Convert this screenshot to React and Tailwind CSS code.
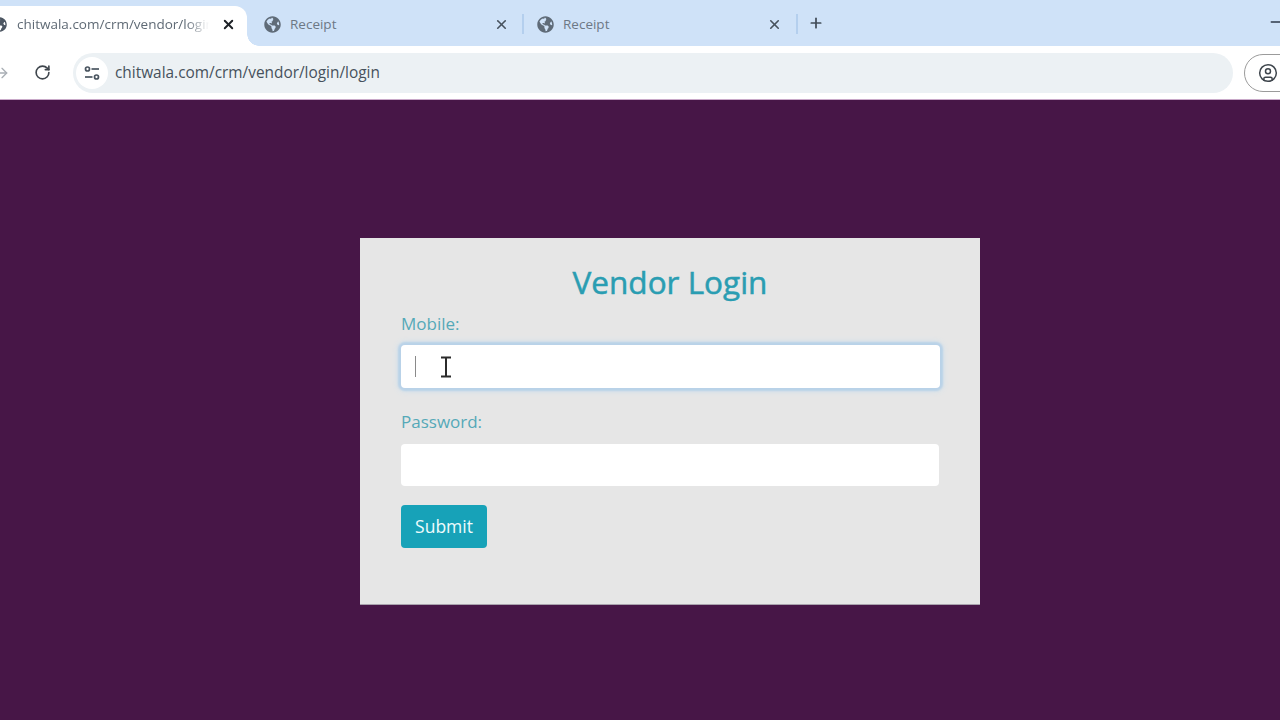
import React from 'react';
import { ArrowRight, CircleUser, Minus, Plus, RotateCw, X } from 'lucide-react';
import { FaGlobeAmericas } from 'react-icons/fa';

const font = "font-['Open_Sans','Noto_Sans',sans-serif]";

const Divider = () => <div className="h-[20px] w-[2px] bg-[#b4cfee]" />;

const InactiveTab = ({ className }) => (
  <div className={`flex shrink-0 items-center ${className}`}>
    <FaGlobeAmericas size={17} className="shrink-0 text-[#5f6b78]" />
    <span className="ml-[9px] flex-1 text-[13.5px] text-[#6d7885]">Receipt</span>
    <X size={15} strokeWidth={2.6} className="text-[#47525e]" />
  </div>
);

const SiteSettings = () => (
  <svg width="16" height="14" viewBox="0 0 16 14" fill="none" stroke="#4a5560" strokeWidth="1.7">
    <circle cx="3.5" cy="3" r="2" />
    <path d="M7.5 3H15" />
    <path d="M1 11h7.5" />
    <circle cx="12.5" cy="11" r="2" />
  </svg>
);

const TextCursor = () => (
  <svg width="12" height="22" viewBox="0 0 12 22" fill="none" stroke="#2b2b2b" strokeWidth="2">
    <path d="M1 1.5h10M1 20.5h10M6 1.5v19" />
  </svg>
);

export default function App() {
  return (
    <div className={`flex h-[720px] w-[1280px] flex-col overflow-hidden bg-[#471647] ${font}`}>
      {/* tab strip */}
      <div className="flex h-[46px] shrink-0 items-center bg-[#cfe2f8] pt-[6px]">
        <div className="relative flex h-full w-[247px] shrink-0 items-center rounded-tr-[12px] bg-white pb-[4px]">
          <FaGlobeAmericas size={15} className="ml-[-8px] shrink-0 text-[#4c5662]" />
          <span className="ml-[10px] w-[192px] overflow-hidden whitespace-nowrap text-[13.5px] text-[#5f6a75] [mask-image:linear-gradient(to_right,black_88%,transparent_100%)]">
            chitwala.com/crm/vendor/login
          </span>
          <X size={15} strokeWidth={3} className="ml-[12px] shrink-0 text-[#1d2126]" />
          <div className="absolute bottom-0 left-full h-[12px] w-[12px] bg-[radial-gradient(circle_at_100%_0,transparent_11.5px,white_12px)]" />
        </div>
        <div className="ml-[17px] mb-[4px] flex items-center">
          <InactiveTab className="w-[258px] pr-[13px]" />
          <Divider />
          <InactiveTab className="w-[272px] pl-[13px] pr-[14px]" />
          <Divider />
        </div>
        <Plus size={16} strokeWidth={2.6} className="ml-[10px] mb-[6px] text-[#414c58]" />
        <Minus size={16} strokeWidth={2.4} className="ml-auto mr-[-4px] mb-[8px] text-[#2f3a4a]" />
      </div>

      {/* toolbar */}
      <div className="flex h-[54px] shrink-0 items-center border-b border-[#c9a9c9] bg-white">
        <ArrowRight size={16} className="ml-[-6px] shrink-0 text-[#a9afb5]" />
        <RotateCw size={17} strokeWidth={2.3} className="ml-[24px] shrink-0 text-[#3f464d]" />
        <div className="ml-[22px] flex h-[40px] w-[1160px] shrink-0 items-center rounded-full bg-[#ecf1f4] pl-[3px]">
          <div className="flex h-[32px] w-[32px] items-center justify-center rounded-full bg-white">
            <SiteSettings />
          </div>
          <span className="ml-[7px] text-[15.4px] text-[#46515c]">chitwala.com/crm/vendor/login/login</span>
        </div>
        <div className="ml-[11px] flex h-[38px] w-[60px] shrink-0 items-center rounded-full border border-[#9b9b9b] pl-[13px]">
          <CircleUser size={20} strokeWidth={1.8} className="text-[#3f464d]" />
        </div>
      </div>

      {/* page */}
      <div className="flex-1 pl-[360px] pt-[138px]">
        <div className="flex h-[367px] w-[620px] flex-col border-b border-[#a9a2ad] bg-[#e6e6e6] px-[41px] pt-[22px]">
          <h1 className="text-center text-[31.5px] font-medium leading-[44px] text-[#2a9db2] [-webkit-text-stroke:0.5px_#2a9db2]">Vendor Login</h1>
          <label className="mt-[8px] text-[17px] leading-[24px] text-[#55a9b8]">Mobile:</label>
          <div className="mt-[9px] flex h-[43px] w-[539px] items-center rounded-[4px] bg-white pl-[14px] shadow-[0_0_2px_3px_#b9d2e8,0_0_6px_3px_#cfe0ec]">
            <div className="h-[21px] w-px bg-[#8a8a8a]" />
            <div className="ml-[24px]">
              <TextCursor />
            </div>
          </div>
          <label className="mt-[22px] text-[17px] leading-[24px] text-[#55a9b8]">Password:</label>
          <input
            type="password"
            aria-label="Password"
            className="mt-[10px] h-[42px] w-[538px] rounded-[4px] bg-white outline-none"
          />
          <button className="mt-[19px] h-[43px] w-[86px] rounded-[4px] bg-[#17a2b8] text-[17.5px] text-[#eefbfc]">
            Submit
          </button>
        </div>
      </div>
    </div>
  );
}
